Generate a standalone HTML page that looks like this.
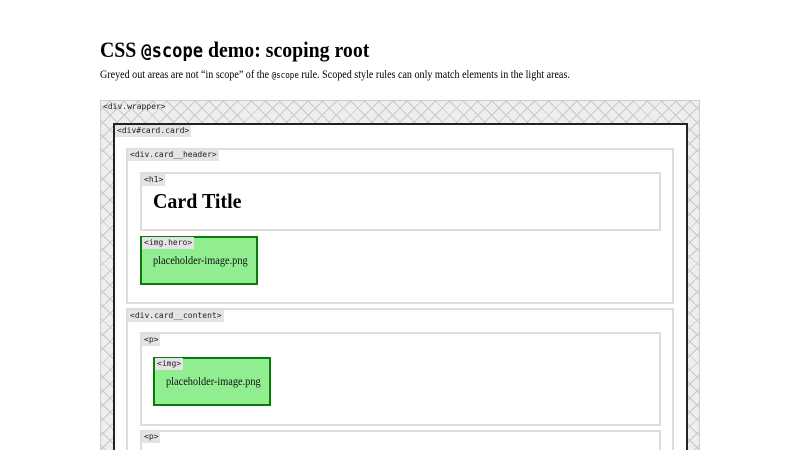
<!DOCTYPE html>
<html style="overflow:hidden;width:800px;height:450px"><head><style>
body{margin:0;width:800px;height:450px;overflow:hidden;background:#fff;font-family:"Liberation Serif",serif;position:relative}
.a{position:absolute;box-sizing:border-box}
.lb{position:absolute;font:8px/12px "DejaVu Sans Mono","Liberation Mono",monospace;background:#e4e4e4;color:#222;padding:0 2px;white-space:nowrap}
.w{left:100px;top:100px;width:600px;height:360px;border:1px solid #ccc;background-color:#eee;
background-image:repeating-linear-gradient(45deg,transparent 0 9px,#c8c8c8 9px 10px),repeating-linear-gradient(-45deg,transparent 0 9px,#c8c8c8 9px 10px)}
.wh{background:#fff}
.g{border:2px solid #ddd}
.grn{background:#90ee90;border:2px solid #0a7a0a}
.pt{position:absolute;font-size:12px;color:#111;white-space:nowrap;transform:scaleX(0.86);transform-origin:left}
</style></head><body>
<div class="a" style="left:100px;top:37px;font-size:22px;font-weight:bold;white-space:nowrap;transform:scaleX(0.9);transform-origin:left">CSS <span style="font-family:'DejaVu Sans Mono',monospace;font-size:19px">@scope</span> demo: scoping root</div>
<div class="a" style="left:100px;top:67px;font-size:12px;white-space:nowrap;transform:scaleX(0.84);transform-origin:left">Greyed out areas are not “in scope” of the <span style="font-family:'DejaVu Sans Mono',monospace;font-size:9px">@scope</span> rule. Scoped style rules can only match elements in the light areas.</div>
<div class="a w"></div>
<div class="lb" style="left:101px;top:101px;background:transparent">&lt;div.wrapper&gt;</div>
<div class="a wh" style="left:113px;top:123px;width:575px;height:340px;border:2px solid #222"></div>
<div class="lb" style="left:115px;top:125px">&lt;div#card.card&gt;</div>
<div class="a wh g" style="left:126px;top:148px;width:548px;height:156px"></div>
<div class="lb" style="left:128px;top:149px">&lt;div.card__header&gt;</div>
<div class="a wh g" style="left:140px;top:172px;width:521px;height:59px"></div>
<div class="lb" style="left:142px;top:174px">&lt;h1&gt;</div>
<div class="a" style="left:153px;top:189px;font-size:21px;font-weight:bold;white-space:nowrap;transform:scaleX(0.95);transform-origin:left">Card Title</div>
<div class="a grn" style="left:140px;top:236px;width:118px;height:49px"></div>
<div class="lb" style="left:142px;top:237px">&lt;img.hero&gt;</div>
<div class="pt" style="left:153px;top:253px">placeholder-image.png</div>
<div class="a wh g" style="left:126px;top:308px;width:548px;height:160px"></div>
<div class="lb" style="left:128px;top:310px">&lt;div.card__content&gt;</div>
<div class="a wh g" style="left:140px;top:332px;width:521px;height:94px"></div>
<div class="lb" style="left:142px;top:334px">&lt;p&gt;</div>
<div class="a grn" style="left:153px;top:357px;width:118px;height:49px"></div>
<div class="lb" style="left:155px;top:358px">&lt;img&gt;</div>
<div class="pt" style="left:166px;top:374px">placeholder-image.png</div>
<div class="a wh g" style="left:140px;top:430px;width:521px;height:40px"></div>
<div class="lb" style="left:142px;top:431px">&lt;p&gt;</div>
</body></html>
